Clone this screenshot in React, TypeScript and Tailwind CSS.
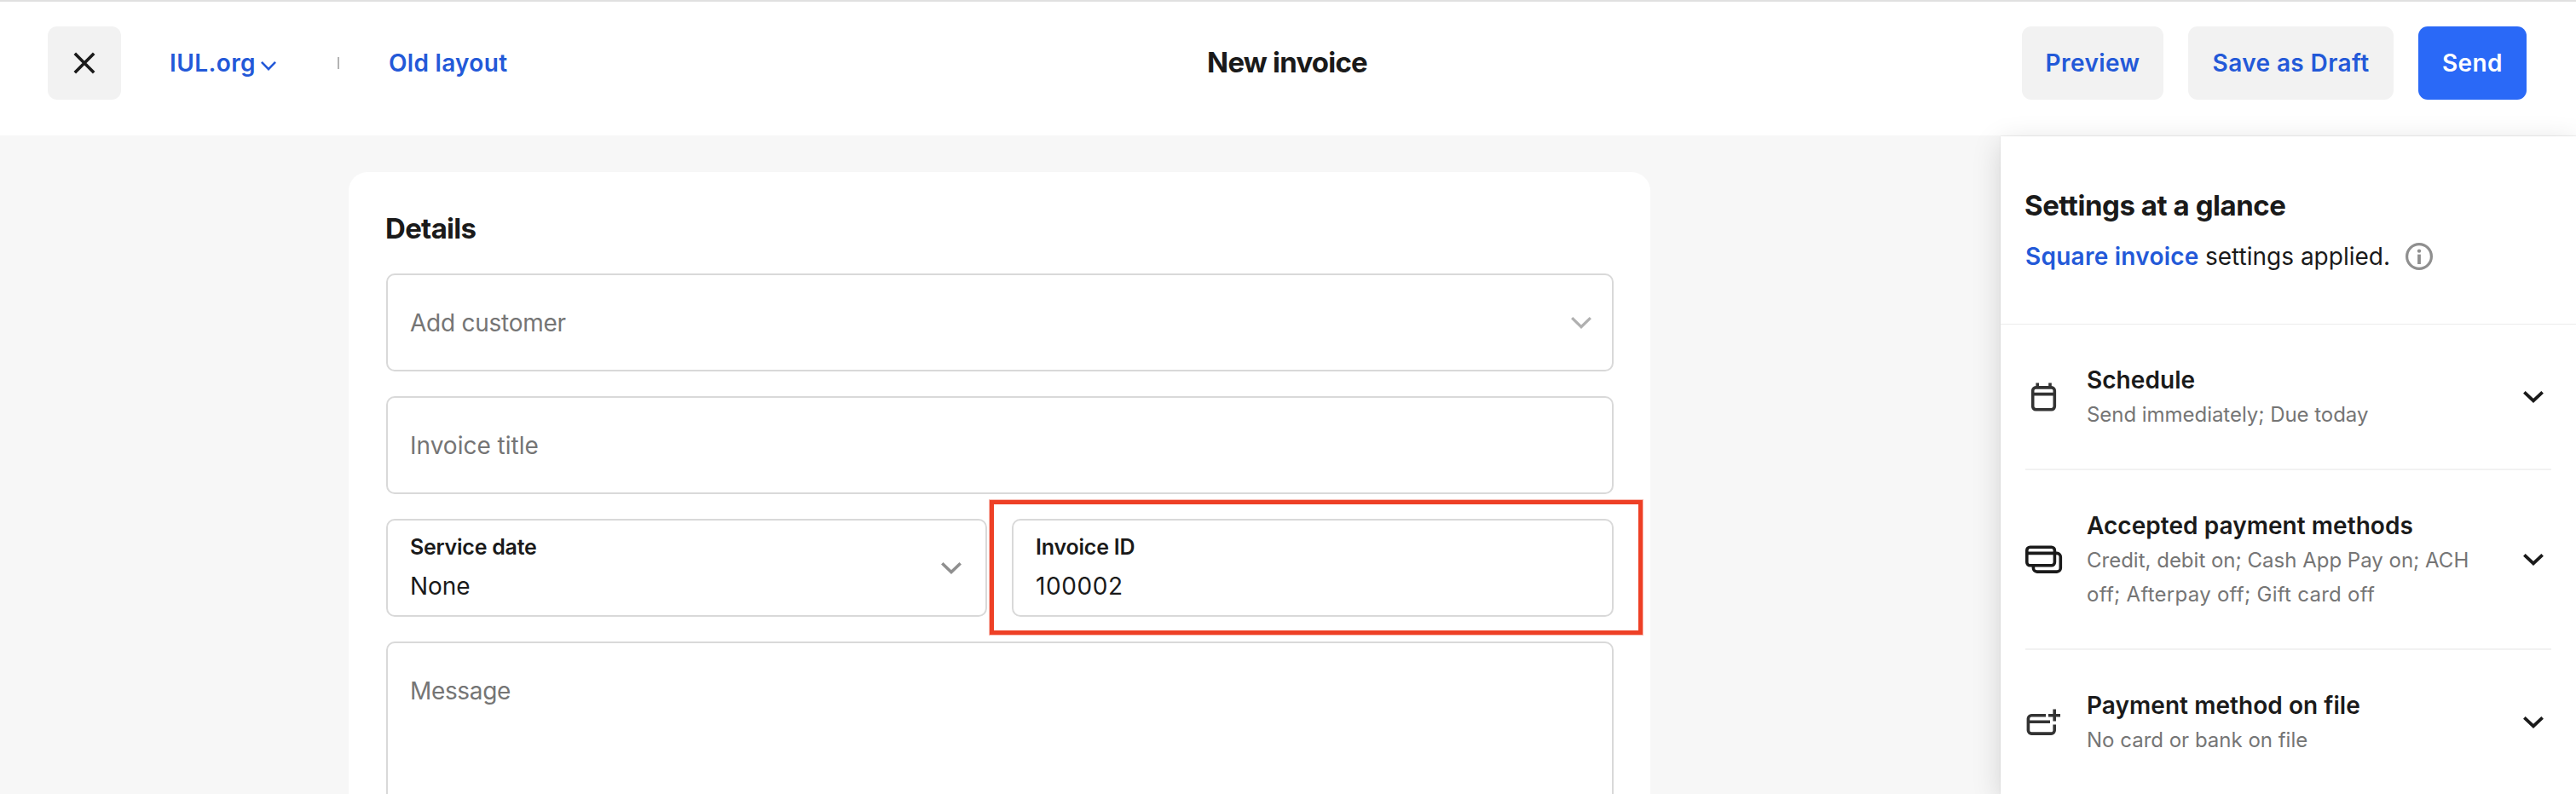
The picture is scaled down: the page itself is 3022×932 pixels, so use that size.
import type { ReactNode } from "react";

function Chevron({ className, width, height, stroke }: { className: string; width: number; height: number; stroke: number }) {
  const i = stroke * 0.36;
  return (
    <svg className={className} width={width} height={height} viewBox={`0 0 ${width} ${height}`} fill="none" stroke="currentColor" strokeWidth={stroke}>
      <path d={`M${i} ${i}L${width / 2} ${height - stroke * 0.7}L${width - i} ${i}`} />
    </svg>
  );
}

function CalendarIcon() {
  return (
    <svg className="text-[#333]" width="44" height="36" viewBox="0 0 44 36" fill="none" stroke="currentColor" strokeWidth="3.6">
      <rect x="8.7" y="6.9" width="25.6" height="25.8" rx="3.6" />
      <path d="M8.7 14.6h25.6M14.2 1.6v5M29 1.6v5" />
    </svg>
  );
}

function CardsIcon() {
  return (
    <svg className="text-[#1a1a1a]" width="44" height="36" viewBox="0 0 44 36" fill="none" stroke="currentColor" strokeWidth="3.6">
      <rect x="1.8" y="3.2" width="32.6" height="21.6" rx="3.8" />
      <path d="M1.7 10.4h32.6M34.3 10.4h2.7a4.3 4.3 0 0 1 4.3 4.3v13.1a4.3 4.3 0 0 1-4.3 4.3H13.7a4.3 4.3 0 0 1-4.3-4.3V25" />
    </svg>
  );
}

function CardPlusIcon() {
  return (
    <svg className="text-[#333]" width="44" height="36" viewBox="0 0 44 36" fill="none" stroke="currentColor" strokeWidth="3.6">
      <path d="M24 9.8H7.2a3.8 3.8 0 0 0-3.8 3.8v13.7a3.8 3.8 0 0 0 3.8 3.8h23.2a3.8 3.8 0 0 0 3.8-3.8V20.5M3.4 17.2H29M27 9.8h14M34.2 2.5v14" />
    </svg>
  );
}

function InfoIcon() {
  return (
    <svg className="ml-[18px] text-[#8f8f8f]" width="32" height="32" viewBox="0 0 32 32" fill="none" stroke="currentColor">
      <circle cx="16" cy="16" r="14.4" strokeWidth="3.2" />
      <circle cx="16" cy="9.6" r="2.2" fill="currentColor" stroke="none" />
      <path d="M16 13.6V25" strokeWidth="3.8" />
    </svg>
  );
}

function Section({ icon, title, lines, last }: { icon: ReactNode; title: string; lines: { text: string; track: string }[]; last?: boolean }) {
  return (
    <section
      className={`mx-[29px] flex shrink-0 items-center ${lines.length > 1 ? "h-[211px]" : last ? "h-[169px]" : "h-[171px]"} ${last ? "" : "border-b-2 border-[#f2f2f2]"}`}
    >
      <div className="w-[72px]">{icon}</div>
      <div className="flex-1 whitespace-nowrap leading-10">
        <h3 className="text-[28px] font-[560] tracking-[0.05px] text-[#1a1a1a]">{title}</h3>
        {lines.map((line) => (
          <p key={line.text} className={`relative top-px text-[24px] text-[#757575] ${line.track}`}>
            {line.text}
          </p>
        ))}
      </div>
      <Chevron className="mr-[9px] text-[#1a1a1a]" width={24} height={14} stroke={3.8} />
    </section>
  );
}

export default function App() {
  return (
    <div className="flex h-[932px] w-full flex-col overflow-hidden bg-[#f7f7f7] font-['Inter','Liberation_Sans',sans-serif] text-[#1a1a1a]">
      <header className="grid h-[159px] shrink-0 grid-cols-[1fr_auto_1fr] items-start border-t-2 border-[#e0e0e0] bg-white pt-[29px]">
        <div className="flex h-[86px] items-center pl-14 text-[28px] font-semibold text-[#2359d8]">
          <button className="flex size-[86px] items-center justify-center rounded-[11px] bg-[#f2f2f2]">
            <svg className="text-[#1a1a1a]" width="26" height="26" viewBox="0 0 26 26" fill="none" stroke="currentColor" strokeWidth="3.6">
              <path d="M1.8 1.8l22.4 22.4M24.2 1.8L1.8 24.2" />
            </svg>
          </button>
          <span className="ml-[57px] w-[107px] tracking-[0.4px]">IUL.org</span>
          <Chevron className="mt-[6px]" width={18} height={11} stroke={2.6} />
          <span className="ml-[72px] h-[14px] w-[2px] bg-[#b3b3b3]" />
          <span className="ml-[58px] whitespace-nowrap tracking-[0.3px]">Old layout</span>
        </div>
        <h1 className="flex h-[86px] items-center pr-[2px] text-[33px] font-bold tracking-[-0.8px]">New invoice</h1>
        <div className="flex justify-end gap-[29px] pr-[58px] text-[28px] font-semibold tracking-[0.4px] text-[#2359d8]">
          <button className="h-[86px] w-[166px] rounded-[11px] bg-[#f2f2f2]">Preview</button>
          <button className="h-[86px] w-[241px] rounded-[11px] bg-[#f2f2f2]">Save as Draft</button>
          <button className="h-[86px] w-[127px] rounded-[11px] bg-[#2a69f7] text-white">Send</button>
        </div>
      </header>

      <div className="flex min-h-0 flex-1">
        <main className="flex-1 overflow-hidden pt-[43px] pl-[409px]">
          <div className="flex h-[900px] w-[1527px] flex-col rounded-[22px] bg-white px-11 pt-[46px]">
            <h2 className="-ml-px text-[33px] leading-10 font-bold tracking-[-0.7px]">Details</h2>
            <div className="mt-[33px] flex w-[1440px] flex-col gap-[29px] text-[28px] leading-10">
              <div className="flex h-[115px] items-center justify-between rounded-[10px] border-2 border-[#d9d9d9] pr-6 pl-[26px] text-[#757575]">
                <span className="tracking-[-0.25px]">Add customer</span>
                <Chevron className="text-[#b0b0b0]" width={24} height={14} stroke={3.2} />
              </div>
              <div className="flex h-[115px] items-center rounded-[10px] border-2 border-[#d9d9d9] px-[26px] text-[#757575]">Invoice title</div>
              <div className="flex gap-[29px]">
                <div className="flex h-[115px] w-[705px] items-center justify-between rounded-[10px] border-2 border-[#d9d9d9] pr-7 pl-[26px]">
                  <div>
                    <div className="text-[25px] leading-[34px] font-[560] tracking-[-0.25px]">Service date</div>
                    <div className="mt-[9px] tracking-[-0.1px]">None</div>
                  </div>
                  <Chevron className="text-[#8f8f8f]" width={24} height={14} stroke={3.6} />
                </div>
                <div className="relative flex-1">
                  <div className="flex h-[115px] flex-col justify-center rounded-[10px] border-2 border-[#d9d9d9] px-[26px]">
                    <div className="text-[25px] leading-[34px] font-[560] tracking-[-0.2px]">Invoice ID</div>
                    <div className="mt-[9px] tracking-[0.6px]">100002</div>
                  </div>
                  <div className="absolute -top-[22px] -right-[34px] -bottom-[21px] -left-[26px] border-5 border-[#ee4026] shadow-[0_0_0_1px_rgba(238,64,38,0.35)]" />
                </div>
              </div>
              <div className="h-[240px] rounded-[10px] border-2 border-[#d9d9d9] px-[26px] pt-9 tracking-[-0.35px] text-[#757575]">Message</div>
            </div>
          </div>
        </main>

        <aside className="mt-px flex w-[675px] flex-col bg-white shadow-[0_8px_32px_rgba(0,0,0,0.15),0_0_2px_rgba(0,0,0,0.1)]">
          <div className="h-[221px] shrink-0 border-b border-[#ededed] px-[29px] pt-[61px]">
            <h2 className="-ml-px text-[33px] leading-10 font-bold tracking-[-0.45px]">Settings at a glance</h2>
            <div className="mt-5 flex h-10 items-center text-[28px]">
              <span className="w-[211px] font-semibold tracking-[0.25px] whitespace-nowrap text-[#2359d8]">Square invoice</span>
              <span>settings applied.</span>
              <InfoIcon />
            </div>
          </div>
          <Section icon={<CalendarIcon />} title="Schedule" lines={[{ text: "Send immediately; Due today", track: "tracking-[-0.04px]" }]} />
          <Section
            icon={<CardsIcon />}
            title="Accepted payment methods"
            lines={[
              { text: "Credit, debit on; Cash App Pay on; ACH", track: "tracking-normal" },
              { text: "off; Afterpay off; Gift card off", track: "tracking-[0.27px]" },
            ]}
          />
          <Section icon={<CardPlusIcon />} title="Payment method on file" lines={[{ text: "No card or bank on file", track: "tracking-normal" }]} last />
        </aside>
      </div>
    </div>
  );
}
